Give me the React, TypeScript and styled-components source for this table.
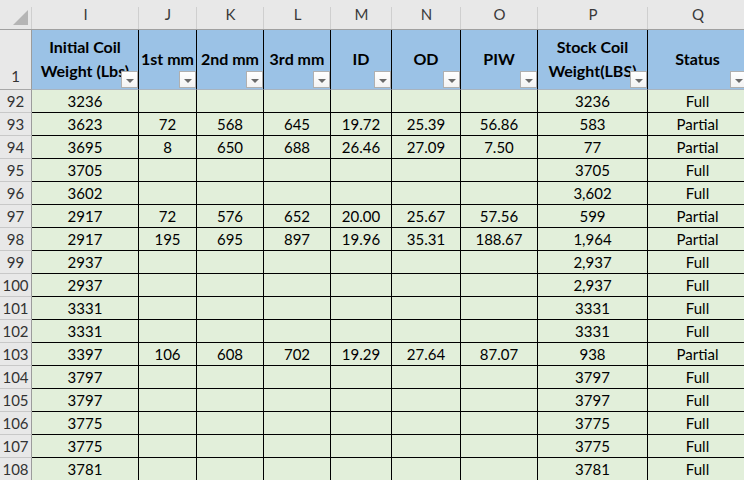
import React from "react";
import styled, { createGlobalStyle, css } from "styled-components";

const Global = createGlobalStyle`
  html, body { margin: 0; padding: 0; background: #ffffff; overflow: hidden; }
  body { font-family: Lato, "Liberation Sans", sans-serif; }
`;

const COLS = [32, 107, 58, 67, 67, 61, 69, 77, 110, 100];

const Sheet = styled.div`
  display: grid;
  grid-template-columns: ${COLS.map((c) => c + "px").join(" ")};
  grid-template-rows: 30px 60px;
  grid-auto-rows: 23px;
  width: 744px;
  overflow: hidden;
  font-family: Lato, "Liberation Sans", sans-serif;
  font-size: 15px;
`;

const sepAfter = css`
  &::after {
    content: "";
    position: absolute;
    right: 0;
    top: 7px;
    bottom: 0;
    width: 1px;
    background: #cfcfcf;
  }
`;

const Corner = styled.div`
  position: relative;
  height: 30px;
  box-sizing: border-box;
  background: #e8e8e8;
  border-bottom: 1px solid #a0a0a0;
  display: flex;
  align-items: flex-end;
  justify-content: flex-end;
  padding: 0 4px 4px 0;
  ${sepAfter}
`;

const CornerTriangle = styled.svg`
  display: block;
`;

const ColLetter = styled.div`
  position: relative;
  height: 30px;
  box-sizing: border-box;
  background: #e8e8e8;
  border-bottom: 1px solid #a0a0a0;
  color: #3a3a3a;
  display: flex;
  align-items: center;
  justify-content: center;
  padding-bottom: 1px;
  ${sepAfter}
`;

const RowNum = styled.div<{ $tall?: boolean }>`
  box-sizing: border-box;
  height: ${(p) => (p.$tall ? 60 : 23)}px;
  background: #e8e8e8;
  border-right: 1px solid #9c9c9c;
  border-bottom: 1px solid ${(p) => (p.$tall ? "#a8a8a8" : "#c8c8c8")};
  color: #333333;
  display: flex;
  justify-content: center;
  align-items: ${(p) => (p.$tall ? "flex-end" : "center")};
  padding-bottom: ${(p) => (p.$tall ? "2px" : "0")};
  line-height: 22px;
`;

const HeadCell = styled.div<{ $nowrap?: boolean }>`
  position: relative;
  box-sizing: border-box;
  height: 60px;
  background: #9bc2e6;
  border-right: 1px solid #000;
  border-bottom: 1px solid #a9b4bf;
  color: #000;
  font-weight: 700;
  font-size: 16px;
  line-height: 24px;
  text-align: center;
  display: flex;
  align-items: center;
  justify-content: center;
  overflow: hidden;
  white-space: ${(p) => (p.$nowrap ? "nowrap" : "normal")};
  padding: 0 0 1px;
`;

const FilterButton = styled.div`
  position: absolute;
  right: 0;
  bottom: 1px;
  width: 17px;
  height: 17px;
  box-sizing: border-box;
  background: linear-gradient(#ffffff, #f3f3f3);
  border: 1px solid #b0b0b0;
  display: flex;
  align-items: center;
  justify-content: center;
`;

const Arrow = styled.span`
  width: 0;
  height: 0;
  border-left: 4px solid transparent;
  border-right: 4px solid transparent;
  border-top: 4px solid #6a6a6a;
  margin-top: 2px;
`;

const Cell = styled.div`
  box-sizing: border-box;
  height: 23px;
  background: #e2efda;
  border-right: 1px solid #000;
  border-bottom: 1px solid #000;
  color: #000;
  display: flex;
  align-items: center;
  justify-content: center;
  line-height: 22px;
  white-space: nowrap;
  overflow: hidden;
`;

const letters = ["I", "J", "K", "L", "M", "N", "O", "P", "Q"];

const headers: { label: string; nowrap?: boolean }[] = [
  { label: "Initial Coil Weight (Lbs)" },
  { label: "1st mm", nowrap: true },
  { label: "2nd mm", nowrap: true },
  { label: "3rd mm", nowrap: true },
  { label: "ID" },
  { label: "OD" },
  { label: "PIW" },
  { label: "Stock Coil Weight(LBS)" },
  { label: "Status" },
];

type Row = [number, string, string, string, string, string, string, string, string, string];

const rows: Row[] = [
  [92, "3236", "", "", "", "", "", "", "3236", "Full"],
  [93, "3623", "72", "568", "645", "19.72", "25.39", "56.86", "583", "Partial"],
  [94, "3695", "8", "650", "688", "26.46", "27.09", "7.50", "77", "Partial"],
  [95, "3705", "", "", "", "", "", "", "3705", "Full"],
  [96, "3602", "", "", "", "", "", "", "3,602", "Full"],
  [97, "2917", "72", "576", "652", "20.00", "25.67", "57.56", "599", "Partial"],
  [98, "2917", "195", "695", "897", "19.96", "35.31", "188.67", "1,964", "Partial"],
  [99, "2937", "", "", "", "", "", "", "2,937", "Full"],
  [100, "2937", "", "", "", "", "", "", "2,937", "Full"],
  [101, "3331", "", "", "", "", "", "", "3331", "Full"],
  [102, "3331", "", "", "", "", "", "", "3331", "Full"],
  [103, "3397", "106", "608", "702", "19.29", "27.64", "87.07", "938", "Partial"],
  [104, "3797", "", "", "", "", "", "", "3797", "Full"],
  [105, "3797", "", "", "", "", "", "", "3797", "Full"],
  [106, "3775", "", "", "", "", "", "", "3775", "Full"],
  [107, "3775", "", "", "", "", "", "", "3775", "Full"],
  [108, "3781", "", "", "", "", "", "", "3781", "Full"],
];

export default function App() {
  return (
    <>
      <Global />
      <Sheet>
        <Corner>
          <CornerTriangle width="15" height="15" viewBox="0 0 15 15">
            <polygon points="15,0 15,15 0,15" fill="#b5b5b5" />
          </CornerTriangle>
        </Corner>
        {letters.map((l) => (
          <ColLetter key={l}>{l}</ColLetter>
        ))}

        <RowNum $tall>1</RowNum>
        {headers.map((h) => (
          <HeadCell key={h.label} $nowrap={h.nowrap}>
            {h.label}
            <FilterButton>
              <Arrow />
            </FilterButton>
          </HeadCell>
        ))}

        {rows.map((r) => (
          <React.Fragment key={r[0]}>
            <RowNum>{r[0]}</RowNum>
            {r.slice(1).map((v, i) => (
              <Cell key={i}>{v}</Cell>
            ))}
          </React.Fragment>
        ))}
      </Sheet>
    </>
  );
}
